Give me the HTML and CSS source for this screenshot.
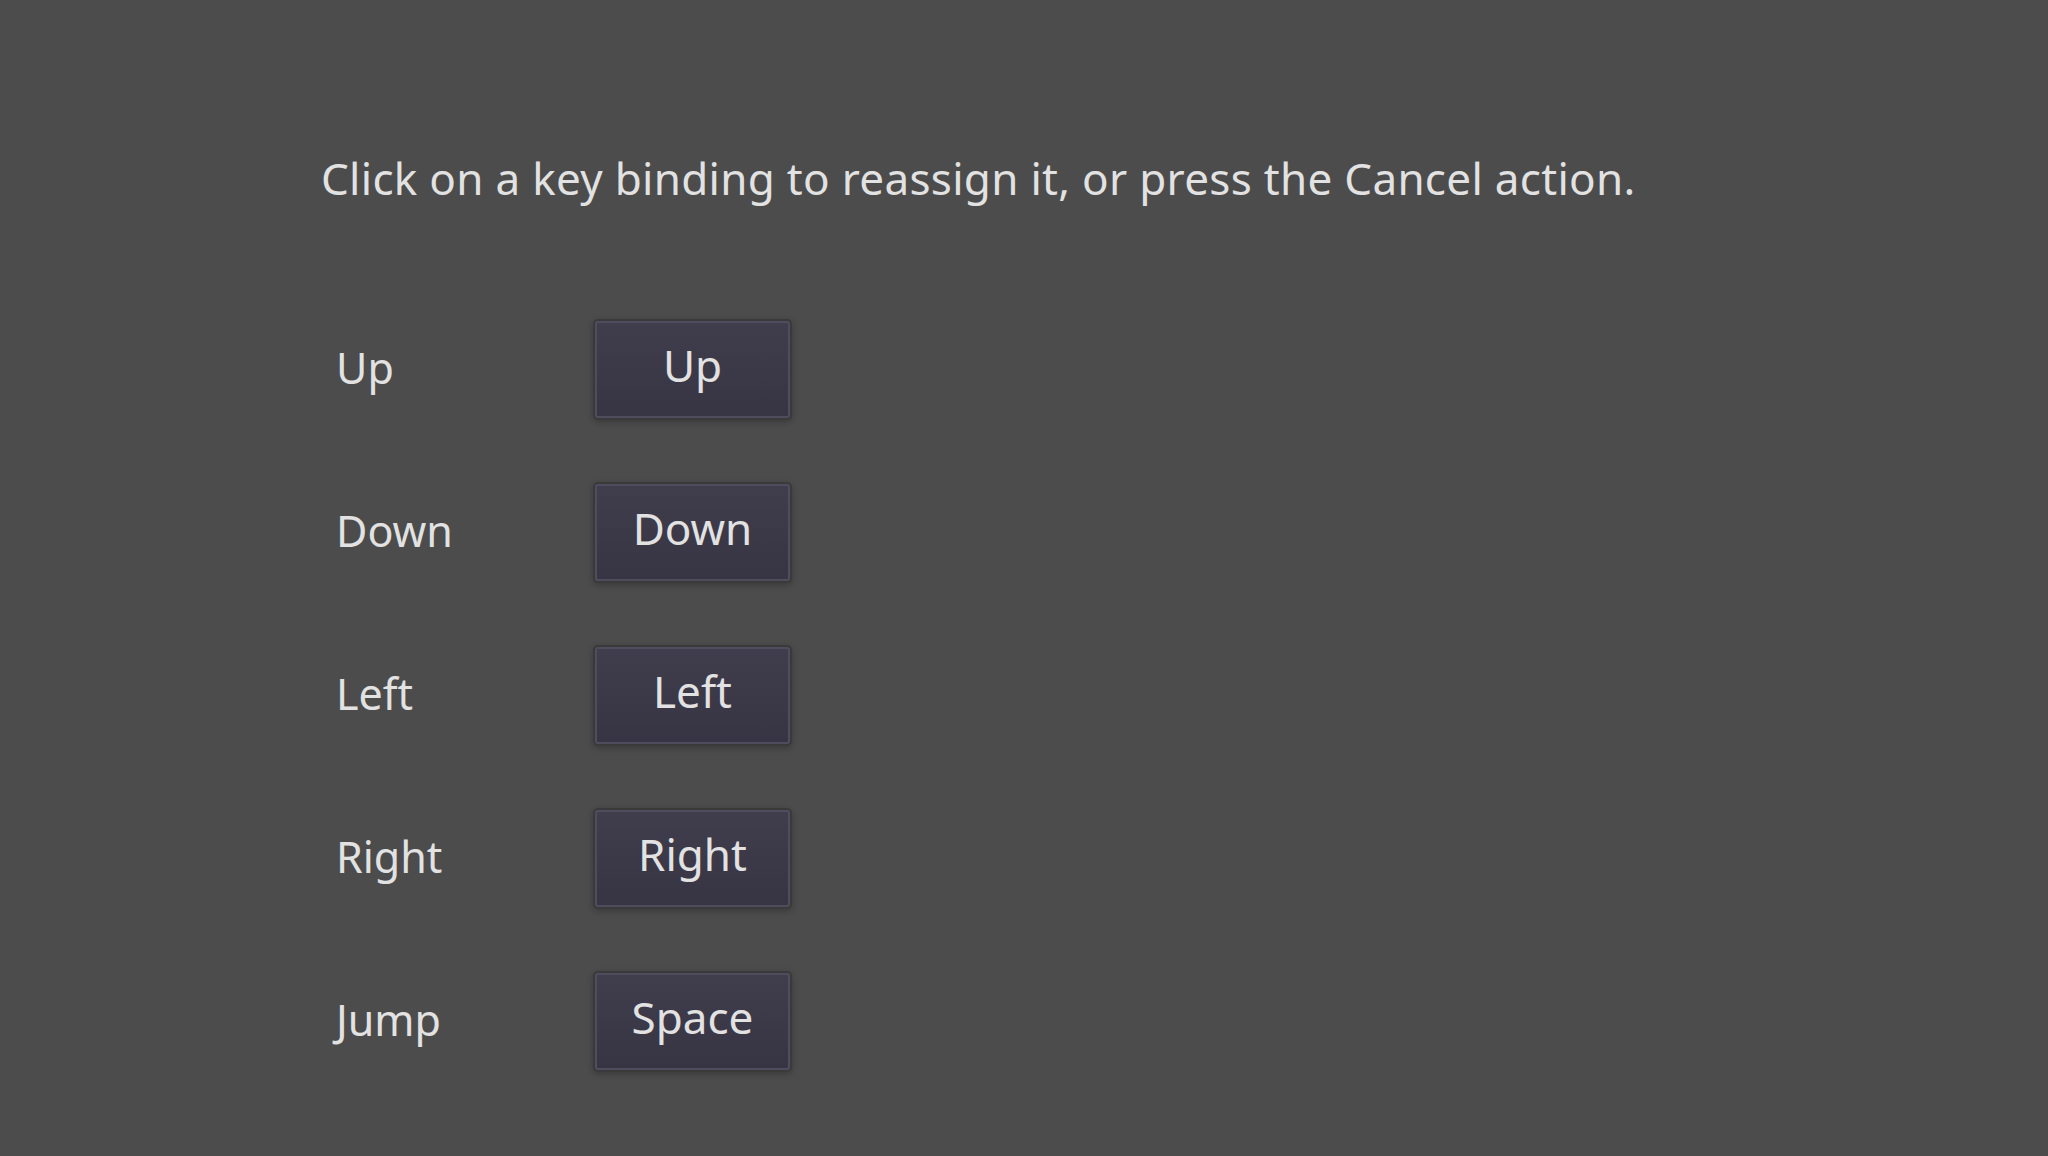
FILE: index.html
```html
<!DOCTYPE html>
<html>
<head>
<meta charset="utf-8">
<link rel="stylesheet" href="styles.css">
</head>
<body>
<main class="panel">
  <p class="hint">Click on a key binding to reassign it, or press the Cancel action.</p>
  <div class="bindings">
    <div class="row"><span class="action">Up</span><button class="key">Up</button></div>
    <div class="row"><span class="action">Down</span><button class="key">Down</button></div>
    <div class="row"><span class="action">Left</span><button class="key">Left</button></div>
    <div class="row"><span class="action">Right</span><button class="key">Right</button></div>
    <div class="row"><span class="action">Jump</span><button class="key">Space</button></div>
  </div>
</main>
</body>
</html>
```
FILE: styles.css
```css
html, body {
  margin: 0;
  padding: 0;
  background: #4c4c4c;
  width: 2048px;
  height: 1156px;
  overflow: hidden;
}
body {
  font-family: "Noto Sans", "Open Sans", "DejaVu Sans", sans-serif;
  color: #e2e2e2;
}
.panel {
  padding: 148px 0 0 321px;
}
.hint {
  margin: 0;
  font-size: 44px;
  line-height: 60px;
  letter-spacing: 0.3px;
}
.bindings {
  display: flex;
  flex-direction: column;
  gap: 66px;
  margin-top: 113px;
  padding-left: 15px;
}
.row {
  display: flex;
  align-items: center;
  height: 97px;
}
.action {
  width: 259px;
  font-size: 43px;
  line-height: 50px;
  padding-bottom: 4px;
}
.key {
  box-sizing: border-box;
  width: 195px;
  height: 97px;
  font-family: inherit;
  font-size: 44px;
  color: #e2e2e2;
  background: linear-gradient(#403e4d, #373543);
  border: 2px solid #4f4d5d;
  border-radius: 3px;
  box-shadow: 0 0 0 2px #3a3a3a, 0 2px 6px 2px rgba(0,0,0,0.25);
  padding: 0 0 10px 0;
}
```
